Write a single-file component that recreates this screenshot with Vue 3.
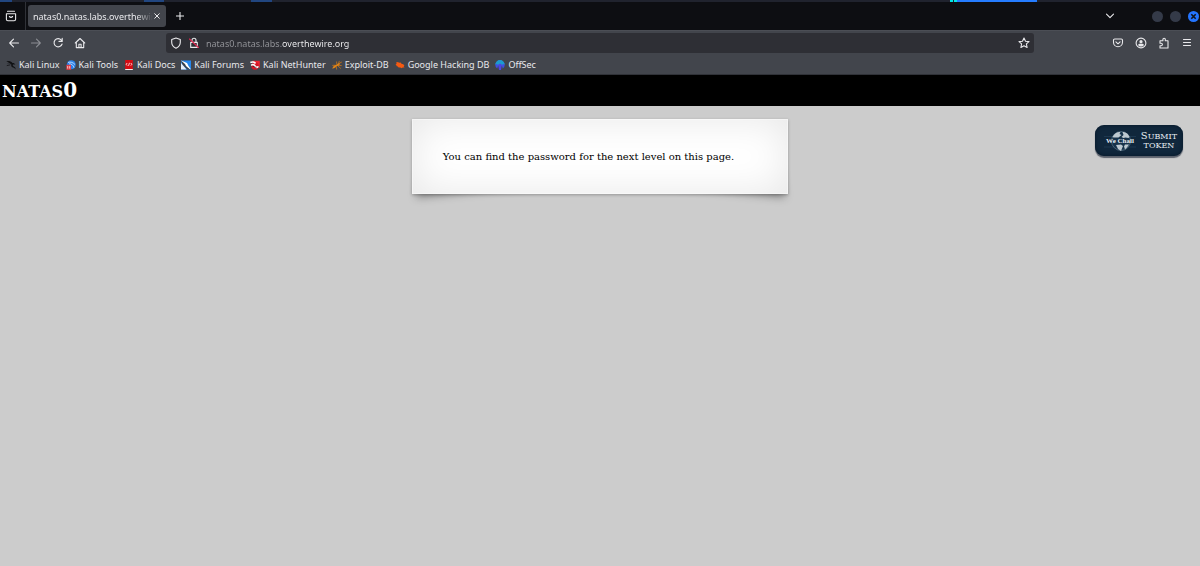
<script setup>
import { ref } from 'vue'

const address = ref('natas0.natas.labs.overthewire.org')
const bookmarks = [
  { name: 'Kali Linux', icon: 'kali' },
  { name: 'Kali Tools', icon: 'tools' },
  { name: 'Kali Docs', icon: 'docs' },
  { name: 'Kali Forums', icon: 'forums' },
  { name: 'Kali NetHunter', icon: 'nethunter' },
  { name: 'Exploit-DB', icon: 'exploit' },
  { name: 'Google Hacking DB', icon: 'ghdb' },
  { name: 'OffSec', icon: 'offsec' },
]
</script>

<template>
  <div class="window">
    <div class="desktop-strip"><i class="s1"></i><i class="s2"></i><i class="s3"></i><i class="s4"></i><i class="s5"></i></div>

    <header class="chrome">
      <div class="tabbar">
        <button class="icon-btn view" aria-label="Firefox View">
          <svg viewBox="0 0 12 12"><path d="M2.5 1.2h7M1.4 3.7h9.2v5.6q0 1.5-1.5 1.5H2.9q-1.5 0-1.5-1.5ZM4.4 6.5q1.6 1.7 3.2 0" /></svg>
        </button>
        <div class="tab">
          <button class="tab-title">natas0.natas.labs.overthewire.org</button>
          <button class="icon-btn close" aria-label="Close tab"><svg viewBox="0 0 6 6"><path d="m.7.7 4.6 4.6M5.3.7.7 5.3" /></svg></button>
        </div>
        <button class="icon-btn plus" aria-label="New tab"><svg viewBox="0 0 8 8"><path d="M4 .3v7.4M.3 4h7.4" /></svg></button>
        <span class="spring"></span>
        <button class="icon-btn chevron" aria-label="List all tabs"><svg viewBox="0 0 8 6"><path d="m.5 1.2 3.5 3.4 3.5-3.4" /></svg></button>
        <div class="controls">
          <button class="round" aria-label="Minimize"></button>
          <button class="round" aria-label="Maximize"></button>
          <button class="round quit" aria-label="Close window"><svg viewBox="0 0 11 11"><path d="m3.3 3.3 4.4 4.4m0-4.4L3.3 7.7" /></svg></button>
        </div>
      </div>

      <nav class="toolbar" aria-label="Navigation">
        <div class="history">
          <button class="icon-btn" aria-label="Back"><svg viewBox="0 0 12 12"><path d="M10.5 6H1.8M5.5 2.2 1.7 6l3.8 3.8" /></svg></button>
          <button class="icon-btn dim" aria-label="Forward"><svg viewBox="0 0 12 12"><path d="M1.5 6h8.7M6.5 2.2 10.3 6 6.5 9.8" /></svg></button>
          <button class="icon-btn" aria-label="Reload"><svg viewBox="0 0 12 12"><path d="M9.3 3.1A4.1 4.1 0 1 0 10.1 7M10.2 1.2v3.2H7" /></svg></button>
          <button class="icon-btn" aria-label="Home"><svg viewBox="0 0 12 12"><path d="M1.3 6 6 1.5 10.7 6M2.3 5.4v5.2h7.4V5.4M4.9 10.5V7.3h2.2v3.2" /></svg></button>
        </div>
        <div class="urlbar">
          <button class="icon-btn" aria-label="Tracking protection"><svg viewBox="0 0 12 12"><path d="M6 1 10.3 2.5v2.7C10.3 8 8.6 9.9 6 11.2 3.4 9.9 1.7 8 1.7 5.2V2.5Z" /></svg></button>
          <button class="icon-btn" aria-label="Connection not secure"><svg viewBox="0 0 12 12"><path d="M4 5V3.3a2 2 0 0 1 4 0V5M2.7 5.4h6.6v5H2.7z" /><path class="slash" d="m1.5 2 9 8.5" /></svg></button>
          <input v-model="address" type="text" aria-label="Address" spellcheck="false" />
          <button class="icon-btn" aria-label="Bookmark this page"><svg viewBox="0 0 12 12"><path d="m6 1 1.5 3.2 3.5.4-2.6 2.3.7 3.6L6 8.8l-3.1 1.7.7-3.6L1 4.6l3.5-.4Z" /></svg></button>
        </div>
        <div class="actions">
          <button class="icon-btn" aria-label="Pocket"><svg viewBox="0 0 12 12"><path d="M2.7 2h6.6q1.2 0 1.2 1.2v2.1a4.5 4.5 0 0 1-9 0V3.2Q1.5 2 2.7 2ZM3.9 4.9 6 6.8l2.1-1.9" /></svg></button>
          <button class="icon-btn" aria-label="Account"><svg viewBox="0 0 12 12"><circle cx="6" cy="6" r="4.9" /><circle class="solid" cx="6" cy="4.7" r="1.6" /><path class="solid" d="M3.2 8.2q0-1.4 1.3-1.4h3q1.3 0 1.3 1.4L7.4 9.5H4.6Z" /></svg></button>
          <button class="icon-btn" aria-label="Extensions"><svg viewBox="0 0 12 12"><path d="M2 3.7h2.9V2.4a1.2 1.2 0 0 1 2.4 0v1.3H10V11H2V8.7h1.2a1.2 1.2 0 0 0 0-2.4H2Z" /></svg></button>
          <button class="icon-btn" aria-label="Menu"><svg viewBox="0 0 12 12"><path d="M2.5 2.5h7M2.5 5.5h7M2.5 8.5h7" /></svg></button>
        </div>
      </nav>

      <nav class="bookmarks" aria-label="Bookmarks">
        <a v-for="b in bookmarks" :key="b.name" href="#">
          <svg viewBox="0 0 10 10" aria-hidden="true">
            <g v-if="b.icon === 'kali'"><path d="M.3 1.2c2.4-.3 4.8.2 6.2 1.8 1.1-.2 2.4.4 2.9 1.6L7 4.4c-.8 1 .3 1.8 1.2 2.3C9.5 7.3 9.8 8.4 9.4 9.6 9 8.2 8.2 7.8 7 7.4 5.2 6.8 5 5.5 5.3 4.4 4 3 2.2 3 .5 3.6L3.3 2.3Z" fill="#111214" /><path d="m.8 5.6 3.5-.8M1.5 1.4l3 .9" stroke="#111214" stroke-width=".8" /></g>
            <g v-else-if="b.icon === 'tools'"><circle cx="5.3" cy="4.7" r="4.5" fill="#287fe8" /><path d="M2 2.5c2.5-1 5 0 7 2M3 3.8c2.5-.2 4.5 1.5 5 4" fill="none" stroke="#d9eaff" stroke-width=".8" /><path d="M.4 4.8H5v5H.4z" fill="#e33b45" /><path d="M1.7 6.1v2.5m2-2.5v2.5" stroke="#fff" stroke-width=".7" /></g>
            <g v-else-if="b.icon === 'docs'"><path d="M1.2 0h7.6v10H1.2z" fill="#d70a12" /><path d="M1.2 9h7.6v1H1.2z" fill="#eee" /><path d="m3.2 3-1 1.3 1 1.3m3.6-2.6 1 1.3-1 1.3M4.5 5.8l1-3" fill="none" stroke="#fff" stroke-width=".8" /></g>
            <g v-else-if="b.icon === 'forums'"><path d="M0 .5h10v9H0z" fill="#2386ed" /><path d="M0 .5 6 3l1.5 3L10 9.5 6 8 2.5 4Z" fill="#fff" /><path d="m0 .5 4 3.500 1 2L9 9.5H6.500L1.500 5Z" fill="#39404a" /><path d="M0 3 5.500 9.500H0Z" fill="#e8eef7" /></g>
            <g v-else-if="b.icon === 'nethunter'"><path d="M2 .7h7.800v7.500Z" fill="#ed2531" /><circle cx="5" cy="6" r="3.700" fill="#d51626" /><path d="M1.200 5.500C2.500 4 4 4.500 5 6s2.500 2 3.200.3M.3 2.500C2 1.700 4.500 2 5.500 3.500" fill="none" stroke="#fff" stroke-width="1.600" /><path d="m2.500 6 4 1.700" stroke="#24272c" stroke-width=".7" /></g>
            <g v-else-if="b.icon === 'exploit'"><path d="M.3 8.800C.8 6.500 2.300 5.300 4.300 4.800L6.800 3l1.600.5-1.600 1.900-2 .8C3.800 7.500 2.300 8.200.3 8.800Z" fill="#e08417" /><path d="m3.500 5.200-3.200.2M4.800 4.600 4.600 1.500m1.800 2.200L7.400.9M7.500 3l2.400-1M6 5.300l3.700.3M5.800 5.800 8.800 8.500M4.300 6.500l.3 3" fill="none" stroke="#d97b13" stroke-width=".7" /></g>
            <g v-else-if="b.icon === 'ghdb'"><path d="M1 2.500 3 2l1 .7 1.600-.3.900 1.400 1.800.4 1.100 1.600-.8.600 1 1.200-2-.2-.8.800-1.500-.8-1.700.2-.8-1.200-1.500-.3.300-.9L.5 4.300l1.200-.5Z" fill="#f55a12" /></g>
            <g v-else><path d="M.3 5A4.700 4.700 0 0 1 9.700 5q0 2.500-1.900 3.500L6.800 5.500 6 10H4L3.200 5.500l-1 3Q.3 7.500.3 5Z" fill="#3f50e2" /><path d="M.3 4.800A4.700 4.700 0 0 1 9.700 4.800L8.500 4 7 4.800 5 3.500 3 4.800 1.500 4Z" fill="#1d9bce" /><path d="M5 4v6" stroke="#6a30dc" stroke-width=".8" /></g>
          </svg>
          <span>{{ b.name }}</span>
        </a>
      </nav>
    </header>

    <h1>NATAS<span>0</span></h1>

    <main>
      <section class="content"><p>You can find the password for the next level on this page.</p></section>
      <button class="submit-token">
        <span class="logo">
          <svg viewBox="0 0 32 22" aria-hidden="true">
            <path d="M0 6.500h32M0 17h32" stroke="#2b4a63" stroke-width=".5" />
            <circle cx="17" cy="11" r="9.500" fill="#17334b" stroke="#5b7589" stroke-width=".7" />
            <path d="M8.500 7c2-4 5-5.500 8-5l-1 2 2 1-3 2.500h-5Zm10-5c4 0 6 2.500 7 5l-1 1-3-.5-2 .500-2-1 2-2ZM12 15l5-.5 2 1.500-2 5-3-2Zm9-.5h4l-2 3-2 2-1-3Z" fill="#bdc9d1" />
          </svg>
          <span class="wechall">We Chall</span>
        </span>
        <span class="submit-text"><span>S</span>UBMIT<br />TOKEN</span>
      </button>
    </main>
  </div>
</template>

<style>
body { margin: 0; background: #ccc; }
</style>

<style scoped>
* { box-sizing: border-box; }
button { padding: 0; border: 0; background: none; color: inherit; font: inherit; }
svg { display: block; }
.window { min-height: 100vh; background: #ccc; color: #000; font-family: "DejaVu Serif", serif; }
.desktop-strip { display: grid; grid-template-columns: 12fr 132fr 20fr 87fr 21fr 678fr 7fr 80fr 163fr; height: 2px; background: #20232e; }
.desktop-strip i { background: #214680; }
.desktop-strip .s1 { grid-column: 1; }
.desktop-strip .s2 { grid-column: 3; }
.desktop-strip .s3 { grid-column: 5; }
.desktop-strip .s4 { grid-column: 7; background: linear-gradient(90deg, #00e5e5 40%, #20232e 40% 60%, #00e5e5 60%); }
.desktop-strip .s5 { grid-column: 8; background: #257cff; }
.chrome { background: #42454c; color: #e9e9ec; font-family: "Noto Sans", sans-serif; font-size: 9px; }
.tabbar { display: flex; align-items: center; height: 28px; background: #0d0e12; }
.icon-btn { display: flex; align-items: center; justify-content: center; flex: none; width: 12px; height: 12px; }
.icon-btn svg { width: 12px; height: 12px; fill: none; stroke: currentColor; stroke-width: 1.1; stroke-linecap: round; stroke-linejoin: round; }
.icon-btn .solid { fill: currentColor; stroke: none; }
.icon-btn .slash { stroke: #e22850; }
.view { width: 26px; height: 28px; padding-right: 4px; border-right: 1px solid #303238; }
.tab { display: flex; align-items: center; width: 138px; height: 22px; margin: 0 10px 0 2px; padding: 0 6px 0 5px; border-radius: 3px; background: #42454c; }
.tab-title { flex: 1; min-width: 0; overflow: hidden; text-align: left; white-space: nowrap; mask-image: linear-gradient(90deg, #000 86%, transparent); }
.close, .close svg { width: 6px; height: 6px; }
.close { margin-left: 1px; }
.close svg { stroke-width: 1; }
.plus, .plus svg, .chevron, .chevron svg { width: 8px; height: 8px; }
.spring { flex: 1; }
.chevron { margin-right: 38px; }
.controls { display: flex; gap: 7px; margin-right: 1px; }
.round { width: 11px; height: 11px; border-radius: 50%; background: #343a48; }
.quit { background: #2475ff; }
.quit svg { fill: none; stroke: #10131a; stroke-width: 1.6; }
.toolbar { display: flex; align-items: center; height: 25px; border-top: 1px solid #4b4e55; }
.history { display: flex; gap: 10px; width: 166px; padding-left: 8px; }
.icon-btn.dim { color: #8c8e94; }
.urlbar { display: flex; flex: 1; align-items: center; gap: 6px; height: 20px; padding: 0 4px; border-radius: 3px; background: #2e2f35; }
.urlbar input { flex: 1; min-width: 0; height: 16px; padding: 0; border: 0; outline: 0; background: linear-gradient(90deg, #96979c 76px, #f7f7f9 76px); background-clip: text; color: transparent; caret-color: #fff; font: 9px "Noto Sans", sans-serif; }
.actions { display: flex; justify-content: flex-end; gap: 11px; width: 166px; padding-right: 7px; }
.bookmarks { display: flex; align-items: center; gap: 6px; height: 20px; padding: 0 6px; border-bottom: 1px solid #303238; }
.bookmarks a { display: flex; align-items: center; gap: 3px; color: inherit; text-decoration: none; white-space: nowrap; }
.bookmarks svg { width: 10px; height: 10px; }
h1 { height: 31px; margin: 0; padding: 1px 2px 0; background: #000; color: #fff; font-size: 16px; line-height: 31px; }
h1 span { font-size: 20px; line-height: 20px; }
main { position: relative; isolation: isolate; padding: 13px 0; }
.content { position: relative; width: max-content; max-width: 90%; margin: 0 auto; padding: 32px 54px 31px 31px; background: #fff; box-shadow: 0 1px 3px rgba(0,0,0,.27), inset 0 0 0 1px rgba(255,255,255,.4), inset 0 0 40px rgba(0,0,0,.1); }
.content::before, .content::after { content: ""; position: absolute; z-index: -1; bottom: 9px; width: 40%; height: 30px; box-shadow: 0 5px 8px rgba(0,0,0,.35); }
.content::before { left: 9px; transform: skew(-15deg) rotate(-6deg); }
.content::after { right: 9px; transform: skew(15deg) rotate(6deg); }
.content p { margin: 0; font-size: 10px; line-height: 12px; }
.submit-token { position: absolute; top: 19px; right: 17px; display: flex; align-items: center; justify-content: space-between; width: 88px; height: 31px; padding: 0 6px 0 9px; border-radius: 9px; background: #10273c; box-shadow: inset 0 0 4px #071727, 0 2px 1px #5b616c; color: #e7edf2; }
.logo { position: relative; }
.logo svg { width: 32px; height: 22px; }
.wechall { position: absolute; inset: 7px 0 auto; font: bold 7px/8px "Liberation Serif", serif; text-align: center; white-space: nowrap; }
.submit-text { font-size: 8px; line-height: 9px; text-align: center; }
.submit-text span { font-size: 10px; }
</style>
